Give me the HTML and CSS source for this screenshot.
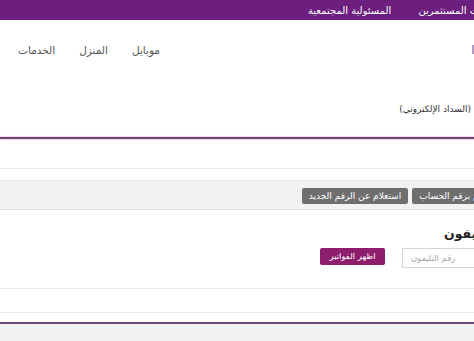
FILE: index.html
```html
<!DOCTYPE html>
<html lang="ar" dir="rtl">
<head>
<meta charset="utf-8">
<link rel="stylesheet" href="styles.css">
</head>
<body>
<div class="page">
  <div class="topbar">
    <span class="top-link">علاقات المستثمرين</span>
    <span class="top-link">المسئولية المجتمعية</span>
  </div>
  <div class="nav">
    <span class="logo-mark"></span>
    <ul class="menu">
      <li>موبايل</li>
      <li>المنزل</li>
      <li>الخدمات</li>
    </ul>
  </div>
  <div class="title-block">
    <span class="title">(السداد الإلكتروني)</span>
  </div>
  <div class="purple-rule"></div>
  <div class="spacer-line"></div>
  <div class="tabs-band">
    <div class="tabs">
      <span class="tab-btn">استعلام برقم الحساب</span>
      <span class="tab-btn">استعلام عن الرقم الجديد</span>
    </div>
  </div>
  <div class="section">
    <h2 class="section-title">فواتير التليفون</h2>
    <div class="form-row">
      <input class="phone-input" type="text" placeholder="رقم التليفون">
      <span class="show-btn">اظهر الفواتير</span>
    </div>
  </div>
  <div class="gap-line one"></div>
  <div class="gap-line two"></div>
  <div class="purple-rule bottom"></div>
  <div class="footer-band"></div>
</div>
</body>
</html>
```
FILE: styles.css
```css
html, body {
  margin: 0;
  padding: 0;
  background: #fff;
}
body {
  width: 474px;
  height: 341px;
  overflow: hidden;
  font-family: "DejaVu Sans", sans-serif;
  direction: rtl;
}
.page {
  width: 474px;
}
.topbar {
  height: 20px;
  background: #6c1f7e;
  display: flex;
  align-items: center;
  gap: 27px;
  margin-right: -25px;
  color: #fff;
  font-size: 10px;
  white-space: nowrap;
}
.nav {
  height: 60px;
  display: flex;
  align-items: center;
}
.logo-mark {
  width: 2px;
  height: 9px;
  background: #b49ac8;
  margin-top: -2px;
}
.menu {
  list-style: none;
  margin: 0 312px 0 0;
  padding: 0;
  display: flex;
  gap: 24px;
  font-size: 10.5px;
  color: #555;
}
.title-block {
  height: 57px;
  box-sizing: border-box;
  display: flex;
  align-items: center;
  padding-right: 3px;
  padding-top: 1px;
}
.title {
  font-size: 9px;
  color: #333;
}
.purple-rule {
  height: 2px;
  background: #6e4673;
  box-shadow: 0 1px 1px #f0d4ee, 0 -1px 1px #f0d4ee;
}
.spacer-line {
  height: 29px;
  border-bottom: 1px solid #ebebeb;
  margin-bottom: 11px;
}
.tabs-band {
  height: 30px;
  box-sizing: border-box;
  background: #f2f2f2;
  border-top: 1px solid #e9e9e9;
  border-bottom: 1px solid #e2e2e2;
  padding-top: 7px;
}
.tabs {
  display: flex;
  gap: 4px;
  margin-right: -34px;
}
.tab-btn {
  height: 16px;
  line-height: 16px;
  padding: 0 7px;
  background: #6f6f6f;
  color: #fff;
  font-size: 9px;
  border-radius: 2px;
  white-space: nowrap;
}
.section {
  padding-top: 16px;
}
.section-title {
  margin: 0 -64px 0 0;
  font-size: 12.5px;
  line-height: 16px;
  font-weight: bold;
  color: #222;
  white-space: nowrap;
}
.form-row {
  margin-top: 6px;
  display: flex;
  align-items: flex-start;
  gap: 17px;
  margin-right: -20px;
}
.phone-input {
  width: 92px;
  height: 20px;
  box-sizing: border-box;
  border: 1px solid #d4d4d4;
  padding: 0 8px;
  text-align: left;
  font-family: "DejaVu Sans", sans-serif;
  font-size: 8.5px;
  color: #999;
}
.phone-input::placeholder {
  color: #a8a8a8;
}
.show-btn {
  width: 65px;
  height: 17px;
  line-height: 17px;
  text-align: center;
  background: #8d1e6e;
  color: #fff;
  font-size: 8.5px;
  border-radius: 2px;
}
.gap-line.one {
  height: 20px;
  border-bottom: 1px solid #ebebeb;
}
.gap-line.two {
  height: 23px;
  border-bottom: 1px solid #ebebeb;
  margin-bottom: 9px;
}
.purple-rule.bottom {
  box-shadow: none;
  background: #6a4a78;
}
.footer-band {
  height: 20px;
  background: #f2f2f2;
}
```
